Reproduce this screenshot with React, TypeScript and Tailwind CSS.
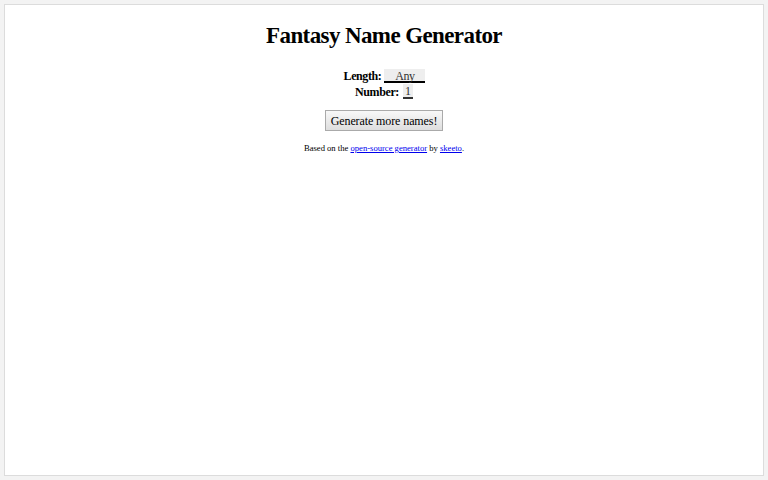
import React from "react";

export default function App() {
  return (
    <div className="w-[768px] h-[480px] bg-[#f3f3f3] p-[4px] pb-[4px]" style={{ fontFamily: '"Liberation Serif", "DejaVu Serif", serif' }}>
      <div className="h-full bg-white border border-[#dcdcdc] flex flex-col items-center text-black">
        <h1 className="mt-[16px] text-[23px] leading-[30px] font-bold tracking-[-0.6px]">Fantasy Name Generator</h1>
        <div className="mt-[18px] flex flex-col items-center text-[12px] leading-[14px] tracking-[-0.4px]">
          <div className="flex items-end gap-[3px] ml-[1px]">
            <span className="font-bold">Length:</span>
            <span className="w-[41px] h-[14px] bg-[#eeeeee] border-b-2 border-black text-center text-[#333] leading-[14px]">Any</span>
          </div>
          <div className="flex items-end gap-[4px] mt-[1px]">
            <span className="font-bold">Number:</span>
            <span className="w-[10px] h-[15px] bg-[#eeeeee] border-b-2 border-[#333] text-center text-[#333] leading-[14px]">1</span>
          </div>
        </div>
        <button className="mt-[11px] h-[21px] w-[118px] text-[12px] leading-[18px] tracking-[-0.1px] border border-[#aaa] bg-gradient-to-b from-[#f8f8f8] to-[#dedede] text-black">
          Generate more names!
        </button>
        <p className="mt-[11px] text-[8.6px] leading-[12px] text-black">
          Based on the <a className="text-[#0000ee] underline">open-source generator</a> by <a className="text-[#0000ee] underline">skeeto</a>.
        </p>
      </div>
    </div>
  );
}
